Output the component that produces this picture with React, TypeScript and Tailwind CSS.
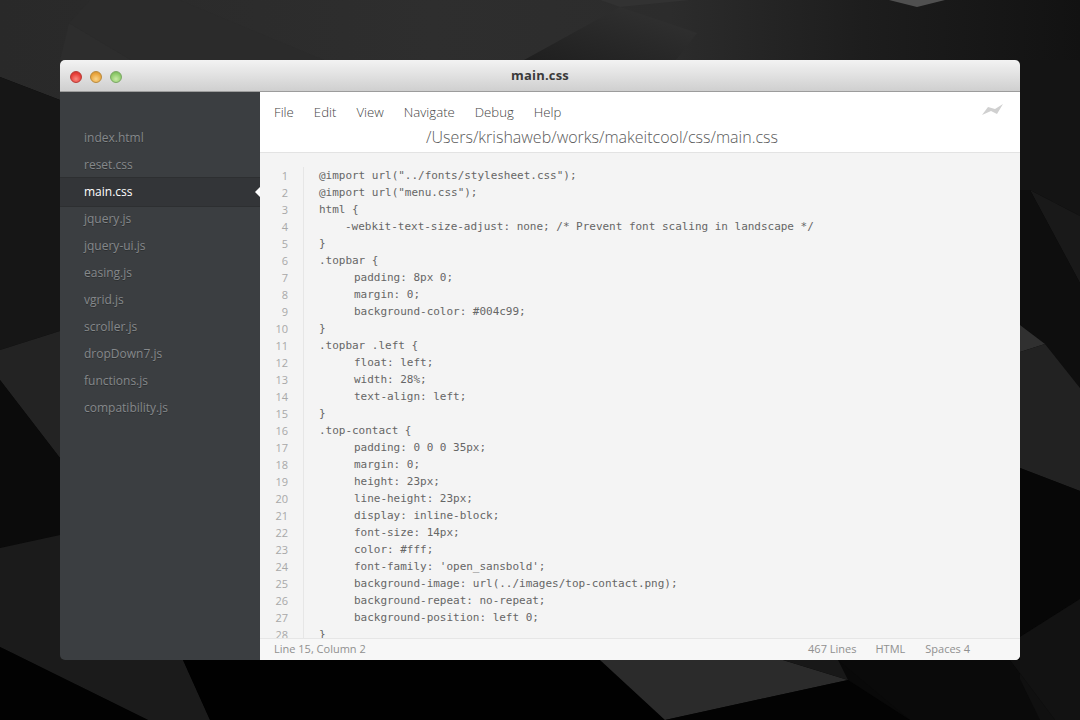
import React from "react";

const files = ["index.html","reset.css","main.css","jquery.js","jquery-ui.js","easing.js","vgrid.js","scroller.js","dropDown7.js","functions.js","compatibility.js"];
const menus = ["File","Edit","View","Navigate","Debug","Help"];
const code: [number,string][] = [
[0,'@import url("../fonts/stylesheet.css");'],
[0,'@import url("menu.css");'],
[0,'html {'],
[1,'-webkit-text-size-adjust: none; /* Prevent font scaling in landscape */'],
[0,'}'],
[0,'.topbar {'],
[2,'padding: 8px 0;'],
[2,'margin: 0;'],
[2,'background-color: #004c99;'],
[0,'}'],
[0,'.topbar .left {'],
[2,'float: left;'],
[2,'width: 28%;'],
[2,'text-align: left;'],
[0,'}'],
[0,'.top-contact {'],
[2,'padding: 0 0 0 35px;'],
[2,'margin: 0;'],
[2,'height: 23px;'],
[2,'line-height: 23px;'],
[2,'display: inline-block;'],
[2,'font-size: 14px;'],
[2,'color: #fff;'],
[2,"font-family: 'open_sansbold';"],
[2,'background-image: url(../images/top-contact.png);'],
[2,'background-repeat: no-repeat;'],
[2,'background-position: left 0;'],
[0,'}'],
];

function Backdrop() {
  return (
    <svg className="absolute inset-0 w-[1080px] h-[720px]" viewBox="0 0 1080 720" aria-hidden="true">
      <defs>
        <linearGradient id="top" x1="0" x2="1" y1="0" y2="0">
          <stop offset="0" stopColor="#292929" />
          <stop offset="0.4" stopColor="#2e2e2e" />
          <stop offset="0.62" stopColor="#2c2c2c" />
          <stop offset="0.8" stopColor="#1d1d1d" />
          <stop offset="1" stopColor="#121212" />
        </linearGradient>
        <linearGradient id="wedge" x1="0" x2="1" y1="1" y2="0">
          <stop offset="0" stopColor="#1f1f1f" />
          <stop offset="1" stopColor="#333333" />
        </linearGradient>
      </defs>
      <rect width="1080" height="720" fill="#090909" />
      <polygon points="0,0 1080,0 1080,110 60,110 60,100 0,77" fill="url(#top)" />
      <polygon points="69,23 131,60 60,60" fill="#2d2d2d" />
      <polygon points="179,0 324,60 131,60 69,23 90,0" fill="#2b2b2b" />
      <polygon points="620,7 697,33 676,60 524,60" fill="url(#wedge)" />
      <polygon points="600,0 690,0 620,7" fill="#323232" />
      <polygon points="889,0 945,0 917,7" fill="#505050" />
      <polygon points="0,77 60,100 60,331 0,350" fill="#161616" />
      <polygon points="0,350 60,331 60,458 0,380" fill="#232323" />
      <polygon points="0,380 60,458 60,535 0,548" fill="#0b0b0b" />
      <polygon points="0,548 60,535 183,660 210,720 148,720 0,647" fill="#1b1b1b" />
      <polygon points="0,647 148,720 0,720" fill="#020202" />
      <polygon points="210,720 183,660 600,660 665,720" fill="#010101" />
      <polygon points="1020,60 1080,60 1080,216 1030,190 1020,190" fill="#141414" />
      <polygon points="1030,190 1080,216 1080,283" fill="#191919" />
      <polygon points="1020,190 1030,190 1080,283 1080,388 1045,344 1020,325" fill="#0e0e0e" />
      <polygon points="1020,325 1045,344 1020,352" fill="#303030" />
      <polygon points="1020,352 1045,344 1080,388 1080,491 1020,468" fill="#222222" />
      <polygon points="1020,468 1080,491 1080,599 1020,637" fill="#070707" />
      <polygon points="1020,637 1080,599 1080,720 1040,720 1020,679" fill="#121212" />
      <polygon points="1020,679 1040,720 1020,720" fill="#050505" />
      <polygon points="600,660 783,660 848,680 665,720" fill="#2b2b2b" />
      <polygon points="783,660 838,660 848,680" fill="#181818" />
      <polygon points="838,660 1010,660 1055,720 910,720" fill="#0a0a0a" />
      <polygon points="848,680 910,720 665,720" fill="#030303" />
      <polygon points="1010,660 1020,660 1020,679 1040,720 1055,720" fill="#101010" />
    </svg>
  );
}

function Light({ tone }: { tone: "r" | "y" | "g" }) {
  const c = tone === "r"
    ? "bg-[radial-gradient(circle_at_50%_70%,#f98a80,#e8403a_60%,#c92e2a)] border-[#b83a34]"
    : tone === "y"
    ? "bg-[radial-gradient(circle_at_50%_70%,#f9d48a,#eaa63f_60%,#cf8a2c)] border-[#b98a3c]"
    : "bg-[radial-gradient(circle_at_50%_70%,#c8eaa6,#8fcb6c_60%,#6cae4c)] border-[#7ba765]";
  return <span className={`w-3 h-3 rounded-full border ${c}`} />;
}

export default function App() {
  return (
    <div className="relative w-[1080px] h-[720px] overflow-hidden bg-black font-['Open_Sans',sans-serif]">
      <Backdrop />
      <div className="relative ml-[60px] pt-[60px] w-[960px]">
        <div className="h-[600px] rounded-[5px] overflow-hidden flex flex-col">
          <div className="relative h-[32px] shrink-0 flex items-center justify-center bg-gradient-to-b from-[#f3f3f3] to-[#cfcfcf] border-b border-[#9c9c9c]">
            <div className="absolute left-[10px] top-[11px] flex gap-2">
              <Light tone="r" />
              <Light tone="y" />
              <Light tone="g" />
            </div>
            <span className="text-[13px] font-bold text-[#3a3a3a] tracking-[0.2px]">main.css</span>
          </div>
          <div className="flex flex-1 min-h-0">
            <aside className="w-[200px] shrink-0 bg-[#3b3e41] pt-[32px]">
              {files.map((f) =>
                f === "main.css" ? (
                  <div key={f} className="relative h-[30px] -mt-px -mb-[2px] flex items-center pl-6 bg-[#333538] border-y border-[#2d2f31] text-xs text-white">
                    {f}
                    <span className="absolute right-0 top-[9px] w-0 h-0 border-y-[5px] border-y-transparent border-r-[5px] border-r-white" />
                  </div>
                ) : (
                  <div key={f} className="h-[27px] flex items-center pl-6 text-xs text-[#85888b] [text-shadow:0_1px_0_rgba(0,0,0,0.25)]">{f}</div>
                )
              )}
            </aside>
            <main className="flex-1 min-w-0 flex flex-col bg-[#f4f4f4]">
              <header className="h-[61px] shrink-0 bg-white border-b border-[#e3e3e3]">
                <div className="flex items-center h-[28px] mt-[2px] pl-[14px] pr-[17px] pt-[10px] gap-5 text-[13.2px] font-light text-[#444]">
                  {menus.map((m) => <span key={m}>{m}</span>)}
                  <svg className="ml-auto -mt-[6px]" width="21" height="12" viewBox="0 0 21 12" aria-hidden="true">
                    <polygon points="0,11 6,3 13,5 21,0 15,10 9,7" fill="#d0d0d0" />
                  </svg>
                </div>
                <div className="pl-[166px] text-base font-light leading-[23px] mt-[4px] text-[#5a5a5a]">/Users/krishaweb/works/makeitcool/css/main.css</div>
              </header>
              <div className="flex-1 min-h-0 overflow-hidden flex pt-[14px]">
                <div className="w-[44px] shrink-0 border-r border-[#e6e6e6] pr-[15px] text-right text-[11px] leading-[17px] text-[#a8a8a8]">
                  {code.map((_, i) => <div key={i}>{i + 1}</div>)}
                </div>
                <div className="pl-[15px] font-['DejaVu_Sans_Mono',monospace] text-[11px] tracking-[-0.02px] leading-[17px] text-[#666] whitespace-pre">
                  {code.map(([ind, t], i) => (
                    <div key={i} className={ind === 1 ? "pl-[26px]" : ind === 2 ? "pl-[35px]" : ""}>{t}</div>
                  ))}
                </div>
              </div>
              <footer className="h-[22px] shrink-0 flex items-center pl-[14px] pr-[50px] bg-[#f7f7f7] border-t border-[#e6e6e6] text-[11px] text-[#909090]">
                <span>Line 15, Column 2</span>
                <span className="ml-auto">467 Lines</span>
                <span className="ml-[19px]">HTML</span>
                <span className="ml-5">Spaces 4</span>
              </footer>
            </main>
          </div>
        </div>
      </div>
    </div>
  );
}
